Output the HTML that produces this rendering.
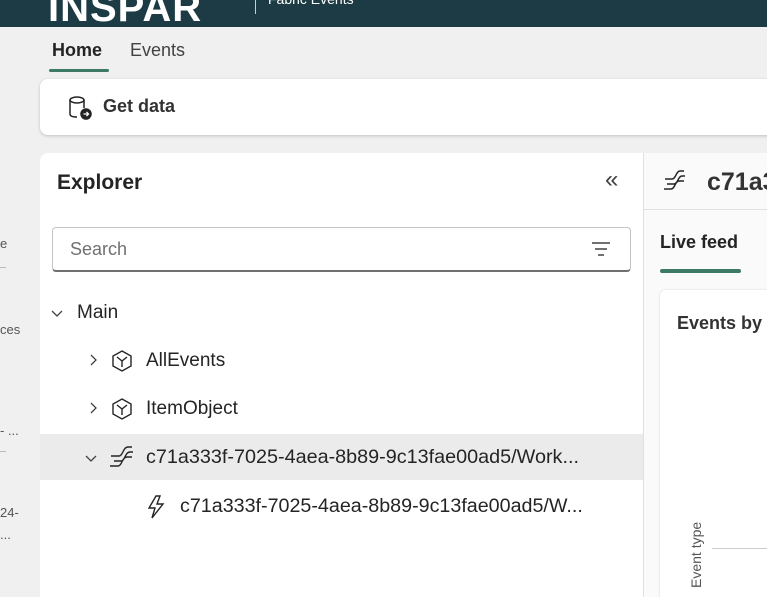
<!DOCTYPE html><html><head><style>
html,body{margin:0;width:767px;height:597px;overflow:hidden}
body{background:#f0f0f0;font-family:"Liberation Sans",sans-serif;color:#242424;position:relative}
.a{position:absolute;white-space:nowrap}
</style></head><body>
<div class="a" style="left:0;top:0;width:767px;height:27px;background:#1c3b44"></div>
<div class="a" style="left:48px;top:-14px;color:#fff;font-weight:bold;font-size:40px;letter-spacing:1px">INSPAR</div>
<div class="a" style="left:255px;top:0;width:1px;height:14px;background:#ccc"></div>
<div class="a" style="left:268px;top:-9px;color:#fff;font-size:14px">Fabric Events</div>
<div class="a" style="left:52px;top:40px;font-size:18px;font-weight:bold">Home</div>
<div class="a" style="left:130px;top:40px;font-size:18px;color:#424242">Events</div>
<div class="a" style="left:49px;top:69px;width:60px;height:3px;background:#3d7a66;border-radius:2px"></div>
<div class="a" style="left:40px;top:79px;width:740px;height:56px;background:#fff;border-radius:8px;box-shadow:0 1px 3px rgba(0,0,0,.2)"></div>
<svg class="a" style="left:68px;top:95px" width="26" height="26" viewBox="0 0 26 26" fill="none" stroke="#242424" stroke-width="1.5"><ellipse cx="9" cy="5" rx="7" ry="3"/><path d="M2 5v14c0 2 3 3 7 3M16 5v8"/><circle cx="18" cy="19" r="5" fill="#242424"/><path d="M15.5 19h5M18.5 17l2 2-2 2" stroke="#fff" stroke-width="1.3"/></svg>
<div class="a" style="left:103px;top:96px;font-size:18px;font-weight:bold;color:#333">Get data</div>
<div class="a" style="left:0;top:236px;font-size:13px;color:#555">e</div>
<div class="a" style="left:0;top:267px;width:6px;height:1px;background:#bbb"></div>
<div class="a" style="left:0;top:322px;font-size:13px;color:#555">ces</div>
<div class="a" style="left:0;top:423px;font-size:13px;color:#555">- ...</div>
<div class="a" style="left:0;top:451px;width:6px;height:1px;background:#bbb"></div>
<div class="a" style="left:0;top:505px;font-size:13px;color:#555">24-</div>
<div class="a" style="left:0;top:527px;font-size:13px;color:#555">...</div>
<div class="a" style="left:40px;top:153px;width:603px;height:460px;background:#fff;border-radius:8px 0 0 0"></div>
<div class="a" style="left:643px;top:153px;width:1px;height:444px;background:#e0e0e0"></div>
<div class="a" style="left:644px;top:153px;width:130px;height:460px;background:#fafafa"></div>
<div class="a" style="left:644px;top:209px;width:130px;height:1px;background:#e0e0e0"></div>
<div class="a" style="left:57px;top:171px;font-size:21px;font-weight:bold">Explorer</div>
<div class="a" style="left:605px;top:166px;font-size:24px;color:#424242">«</div>
<div class="a" style="left:52px;top:227px;width:577px;height:42px;border:1px solid #c4c4c4;border-bottom:2px solid #707070;border-radius:4px"></div>
<div class="a" style="left:70px;top:239px;font-size:18px;color:#707070">Search</div>
<svg class="a" style="left:590px;top:240px" width="22" height="18" stroke="#424242" stroke-width="1.4"><path d="M2 3h18M5 9h12M8 15h6"/></svg>
<svg class="a" style="left:50px;top:306px" width="14" height="14" fill="none" stroke="#424242" stroke-width="1.3"><path d="M2 5l5 5 5-5"/></svg>
<div class="a" style="left:77px;top:302px;font-size:19px">Main</div>
<svg class="a" style="left:86px;top:353px" width="14" height="14" fill="none" stroke="#424242" stroke-width="1.3"><path d="M5 2l5 5-5 5"/></svg>
<svg class="a" style="left:110px;top:349px" width="24" height="24" fill="none" stroke="#242424" stroke-width="1.4"><path d="M12 2l9 5v10l-9 5-9-5V7z"/><path d="M7 8l5 4 5-4M12 12v6"/></svg>
<div class="a" style="left:146px;top:350px;font-size:19px">AllEvents</div>
<svg class="a" style="left:86px;top:401px" width="14" height="14" fill="none" stroke="#424242" stroke-width="1.3"><path d="M5 2l5 5-5 5"/></svg>
<svg class="a" style="left:110px;top:397px" width="24" height="24" fill="none" stroke="#242424" stroke-width="1.4"><path d="M12 2l9 5v10l-9 5-9-5V7z"/><path d="M7 8l5 4 5-4M12 12v6"/></svg>
<div class="a" style="left:146px;top:398px;font-size:19px">ItemObject</div>
<div class="a" style="left:40px;top:434px;width:603px;height:46px;background:#ebebeb"></div>
<svg class="a" style="left:84px;top:451px" width="14" height="14" fill="none" stroke="#424242" stroke-width="1.3"><path d="M2 5l5 5 5-5"/></svg>
<svg class="a" style="left:108px;top:444px" width="28" height="26" fill="none" stroke="#242424" stroke-width="1.4"><path d="M3 12h8c4 0 4-9 9-9h4M6 17h7c4 0 4-9 9-9h3M2 22h8c4 0 4-9 9-9h5"/></svg>
<div class="a" style="left:146px;top:446px;font-size:19.8px">c71a333f-7025-4aea-8b89-9c13fae00ad5/Work...</div>
<svg class="a" style="left:146px;top:494px" width="20" height="26" fill="none" stroke="#242424" stroke-width="1.4"><path d="M10 2L3 14h6l-3 10 11-14h-6l3-8z"/></svg>
<div class="a" style="left:180px;top:495px;font-size:19.7px">c71a333f-7025-4aea-8b89-9c13fae00ad5/W...</div>
<svg class="a" style="left:662px;top:169px" width="26" height="24" fill="none" stroke="#242424" stroke-width="1.4"><path d="M3 10h7c4 0 4-8 8-8h4M5 15h7c4 0 4-8 8-8h3M2 20h7c4 0 4-8 8-8h5"/></svg>
<div class="a" style="left:707px;top:168px;font-size:25px;font-weight:bold;color:#333">c71a333</div>
<div class="a" style="left:660px;top:232px;font-size:18px;font-weight:bold">Live feed</div>
<div class="a" style="left:660px;top:269px;width:81px;height:4px;background:#3d7a66;border-radius:2px"></div>
<div class="a" style="left:660px;top:290px;width:120px;height:320px;background:#fff;border-radius:6px;box-shadow:0 0 2px rgba(0,0,0,.15)"></div>
<div class="a" style="left:677px;top:313px;font-size:18px;font-weight:bold;color:#333">Events by</div>
<div class="a" style="left:712px;top:548px;width:60px;height:1px;background:#ccc"></div>
<div class="a" style="left:688px;top:588px;font-size:14px;color:#555;transform:rotate(-90deg);transform-origin:0 0">Event type</div>
</body></html>
